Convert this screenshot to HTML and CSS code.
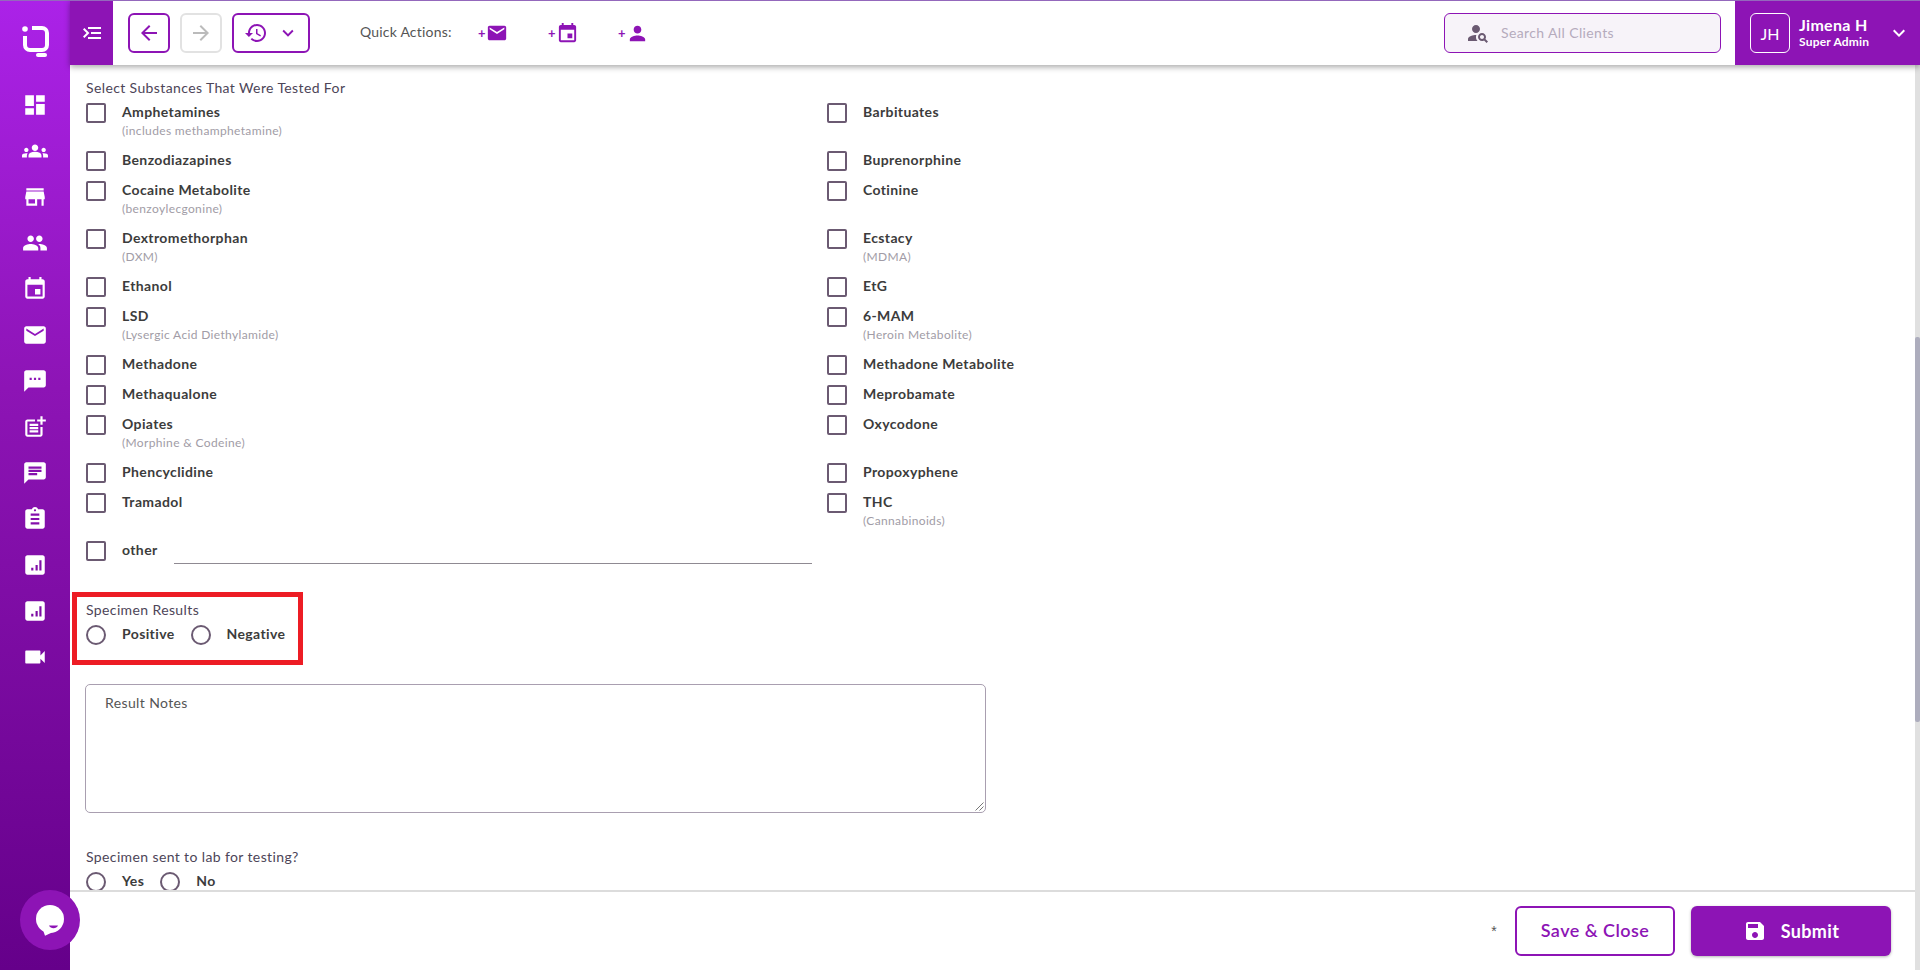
FILE: index.html
```html
<!DOCTYPE html>
<html lang="en">
<head>
<meta charset="utf-8">
<title>Specimen Results</title>
<link rel="stylesheet" href="styles.css">
</head>
<body>
<aside class="sidebar">
  <div class="logo">
    <svg viewBox="0 0 32 36" width="32" height="36"><circle cx="5" cy="4" r="2.800" fill="#fff"/><path d="M5 11v9a5 5 0 0 0 5 5h12a5 5 0 0 0 5-5V8a5 5 0 0 0-5-5H12" fill="none" stroke="#fff" stroke-width="4"/><rect x="16" y="28" width="11" height="4" rx="2" fill="#fff"/></svg>
  </div>
  <nav class="nav">
    <svg class="nav-icon" viewBox="0 0 24 24"><path d="M3 13h8V3H3v10zm0 8h8v-6H3v6zm10 0h8V11h-8v10zm0-18v6h8V3h-8z"/></svg>
    <svg class="nav-icon" viewBox="0 0 24 24"><path d="M12 12.750c1.630 0 3.070.39 4.240.9 1.080.48 1.760 1.560 1.760 2.730V18H6v-1.610c0-1.180.68-2.260 1.760-2.730 1.170-.52 2.610-.91 4.240-.91zM4 13c1.100 0 2-.9 2-2s-.9-2-2-2-2 .9-2 2 .9 2 2 2zm1.130 1.100c-.37-.06-.74-.1-1.130-.1-.99 0-1.930.21-2.780.58C.48 14.900 0 15.620 0 16.430V18h4.500v-1.610c0-.83.23-1.610.63-2.290zM20 13c1.100 0 2-.9 2-2s-.9-2-2-2-2 .9-2 2 .9 2 2 2zm4 3.430c0-.81-.48-1.530-1.220-1.850-.85-.37-1.790-.58-2.780-.58-.39 0-.76.04-1.130.1.4.68.63 1.460.63 2.290V18H24v-1.570zM12 6c1.660 0 3 1.340 3 3s-1.340 3-3 3-3-1.340-3-3 1.340-3 3-3z"/></svg>
    <svg class="nav-icon" viewBox="0 0 24 24"><path d="M20 4H4v2h16V4zm1 10v-2l-1-5H4l-1 5v2h1v6h10v-6h4v6h2v-6h1zm-9 4H6v-4h6v4z"/></svg>
    <svg class="nav-icon" viewBox="0 0 24 24"><path d="M16 11c1.660 0 2.990-1.340 2.990-3S17.660 5 16 5c-1.660 0-3 1.340-3 3s1.340 3 3 3zm-8 0c1.660 0 2.990-1.340 2.990-3S9.660 5 8 5C6.340 5 5 6.340 5 8s1.340 3 3 3zm0 2c-2.330 0-7 1.170-7 3.500V19h14v-2.500c0-2.330-4.670-3.500-7-3.500zm8 0c-.29 0-.62.02-.97.05 1.160.84 1.970 1.970 1.970 3.450V19h6v-2.500c0-2.330-4.670-3.500-7-3.500z"/></svg>
    <svg class="nav-icon" viewBox="0 0 24 24"><path d="M17 12h-5v5h5v-5zM16 1v2H8V1H6v2H5c-1.110 0-1.990.9-1.990 2L3 19c0 1.100.89 2 2 2h14c1.100 0 2-.9 2-2V5c0-1.100-.9-2-2-2h-1V1h-2zm3 18H5V8h14v11z"/></svg>
    <svg class="nav-icon" viewBox="0 0 24 24"><path d="M20 4H4c-1.100 0-1.990.9-1.990 2L2 18c0 1.100.9 2 2 2h16c1.100 0 2-.9 2-2V6c0-1.100-.9-2-2-2zm0 4l-8 5-8-5V6l8 5 8-5v2z"/></svg>
    <svg class="nav-icon" viewBox="0 0 24 24"><path d="M20 2H4c-1.100 0-1.990.9-1.990 2L2 22l4-4h14c1.100 0 2-.9 2-2V4c0-1.100-.9-2-2-2zM9 11H7V9h2v2zm4 0h-2V9h2v2zm4 0h-2V9h2v2z"/></svg>
    <svg class="nav-icon" viewBox="0 0 24 24"><path d="M17 19.220H5V7h7V5H5c-1.100 0-2 .9-2 2v12c0 1.100.9 2 2 2h12c1.100 0 2-.9 2-2v-7h-2v7.220z"/><path d="M19 2h-2v3h-3c.01.01 0 2 0 2h3v2.990c.01.01 2 0 2 0V7h3V5h-3V2z"/><path d="M7 9h8v2H7zM7 12h8v2H7zM7 15h8v2H7z"/></svg>
    <svg class="nav-icon" viewBox="0 0 24 24"><path d="M20 2H4c-1.100 0-1.990.9-1.990 2L2 22l4-4h14c1.100 0 2-.9 2-2V4c0-1.100-.9-2-2-2zM6 9h12v2H6V9zm8 5H6v-2h8v2zm4-6H6V6h12v2z"/></svg>
    <svg class="nav-icon" viewBox="0 0 24 24"><path d="M19 3h-4.180C14.400 1.840 13.300 1 12 1c-1.300 0-2.400.84-2.820 2H5c-1.100 0-2 .9-2 2v14c0 1.100.9 2 2 2h14c1.100 0 2-.9 2-2V5c0-1.100-.9-2-2-2zm-7 0c.55 0 1 .45 1 1s-.45 1-1 1-1-.45-1-1 .45-1 1-1zm4 14H8v-2h8v2zm0-4H8v-2h8v2zm0-4H8V7h8v2z"/></svg>
    <svg class="nav-icon" viewBox="0 0 24 24"><path fill-rule="evenodd" d="M5 3h14c1.100 0 2 .9 2 2v14c0 1.100-.9 2-2 2H5c-1.100 0-2-.9-2-2V5c0-1.100.9-2 2-2zm3.500 11.500v2.500h2v-2.500h-2zm4-2.500v5h2v-5h-2zm3.500-4.500v9.500h2V7.500h-2z"/></svg>
    <svg class="nav-icon" viewBox="0 0 24 24"><path fill-rule="evenodd" d="M5 3h14c1.100 0 2 .9 2 2v14c0 1.100-.9 2-2 2H5c-1.100 0-2-.9-2-2V5c0-1.100.9-2 2-2zm3.500 11.500v2.500h2v-2.500h-2zm4-2.500v5h2v-5h-2zm3.500-4.500v9.500h2V7.500h-2z"/></svg>
    <svg class="nav-icon" viewBox="0 0 24 24"><path d="M17 10.500V7c0-.55-.45-1-1-1H4c-.55 0-1 .45-1 1v10c0 .55.45 1 1 1h12c.55 0 1-.45 1-1v-3.500l4 4v-11l-4 4z"/></svg>
  </nav>
</aside>

<div class="main">
  <header class="topbar">
    <button class="toggle" type="button" aria-label="Toggle menu">
      <svg class="flip" viewBox="0 0 24 24" width="24" height="24"><path d="M3 18h13v-2H3v2zm0-5h10v-2H3v2zm0-7v2h13V6H3zm18 9.590L17.420 12 21 8.410 19.590 7l-5 5 5 5L21 15.590z"/></svg>
    </button>
    <div class="history-nav">
      <button class="tool" type="button" aria-label="Back"><svg viewBox="0 0 24 24" width="24" height="24"><path d="M20 11H7.830l5.590-5.590L12 4l-8 8 8 8 1.410-1.410L7.830 13H20v-2z"/></svg></button>
      <button class="tool disabled" type="button" aria-label="Forward"><svg viewBox="0 0 24 24" width="24" height="24"><path d="M12 4l-1.410 1.410L16.170 11H4v2h12.170l-5.580 5.590L12 20l8-8z"/></svg></button>
      <button class="tool wide" type="button" aria-label="History">
        <svg viewBox="0 0 24 24" width="24" height="24"><path d="M13 3c-4.970 0-9 4.030-9 9H1l3.890 3.890.07.14L9 12H6c0-3.870 3.130-7 7-7s7 3.130 7 7-3.130 7-7 7c-1.930 0-3.680-.79-4.940-2.060l-1.420 1.420C8.270 19.990 10.510 21 13 21c4.970 0 9-4.030 9-9s-4.030-9-9-9zm-1 5v5l4.280 2.540.72-1.210-3.500-2.080V8H12z"/></svg>
        <svg viewBox="0 0 24 24" width="22" height="22"><path d="M7.410 8.590L12 13.170l4.590-4.580L18 10l-6 6-6-6 1.410-1.410z"/></svg>
      </button>
    </div>
    <span class="quick-label">Quick Actions:</span>
    <div class="quick-actions">
      <span class="quick"><span class="plus">+</span><svg viewBox="0 0 24 24" width="22" height="22"><path d="M20 4H4c-1.100 0-1.990.9-1.990 2L2 18c0 1.100.9 2 2 2h16c1.100 0 2-.9 2-2V6c0-1.100-.9-2-2-2zm0 4l-8 5-8-5V6l8 5 8-5v2z"/></svg></span>
      <span class="quick"><span class="plus">+</span><svg viewBox="0 0 24 24" width="23" height="23"><path d="M17 12h-5v5h5v-5zM16 1v2H8V1H6v2H5c-1.110 0-1.990.9-1.990 2L3 19c0 1.100.89 2 2 2h14c1.100 0 2-.9 2-2V5c0-1.100-.9-2-2-2h-1V1h-2zm3 18H5V8h14v11z"/></svg></span>
      <span class="quick"><span class="plus">+</span><svg viewBox="0 0 24 24" width="23" height="23"><path d="M12 12c2.210 0 4-1.790 4-4s-1.790-4-4-4-4 1.790-4 4 1.790 4 4 4zm0 2c-2.670 0-8 1.340-8 4v2h16v-2c0-2.660-5.330-4-8-4z"/></svg></span>
    </div>
    <div class="search">
      <svg viewBox="0 0 24 24" width="24" height="24"><path d="M10 12c2.210 0 4-1.790 4-4s-1.790-4-4-4-4 1.790-4 4 1.790 4 4 4zM10.350 14.010C7.620 13.910 2 15.270 2 18v2h9.540c-2.470-2.760-1.230-5.890-1.190-5.990zM19.430 18.020c.36-.59.57-1.280.57-2.020 0-2.210-1.790-4-4-4s-4 1.790-4 4 1.790 4 4 4c.74 0 1.430-.22 2.020-.57L20.590 22 22 20.590l-2.570-2.570zM16 18c-1.100 0-2-.9-2-2s.9-2 2-2 2 .9 2 2-.9 2-2 2z"/></svg>
      <span class="search-text">Search All Clients</span>
    </div>
    <div class="user">
      <span class="avatar">JH</span>
      <span class="user-info"><span class="user-name">Jimena H</span><span class="user-role">Super Admin</span></span>
      <svg viewBox="0 0 24 24" width="24" height="24"><path d="M7.410 8.590L12 13.170l4.590-4.580L18 10l-6 6-6-6 1.410-1.410z"/></svg>
    </div>
  </header>

  <div class="body-row">
    <div class="column">
      <main class="content">
        <div class="field-title">Select Substances That Were Tested For</div>
        <div class="grid">
          <div class="item double"><span class="box"></span><span class="text"><b>Amphetamines</b><small>(includes methamphetamine)</small></span></div>
          <div class="item double"><span class="box"></span><span class="text"><b>Barbituates</b></span></div>
          <div class="item"><span class="box"></span><span class="text"><b>Benzodiazapines</b></span></div>
          <div class="item"><span class="box"></span><span class="text"><b>Buprenorphine</b></span></div>
          <div class="item double"><span class="box"></span><span class="text"><b>Cocaine Metabolite</b><small>(benzoylecgonine)</small></span></div>
          <div class="item double"><span class="box"></span><span class="text"><b>Cotinine</b></span></div>
          <div class="item double"><span class="box"></span><span class="text"><b>Dextromethorphan</b><small>(DXM)</small></span></div>
          <div class="item double"><span class="box"></span><span class="text"><b>Ecstacy</b><small>(MDMA)</small></span></div>
          <div class="item"><span class="box"></span><span class="text"><b>Ethanol</b></span></div>
          <div class="item"><span class="box"></span><span class="text"><b>EtG</b></span></div>
          <div class="item double"><span class="box"></span><span class="text"><b>LSD</b><small>(Lysergic Acid Diethylamide)</small></span></div>
          <div class="item double"><span class="box"></span><span class="text"><b>6-MAM</b><small>(Heroin Metabolite)</small></span></div>
          <div class="item"><span class="box"></span><span class="text"><b>Methadone</b></span></div>
          <div class="item"><span class="box"></span><span class="text"><b>Methadone Metabolite</b></span></div>
          <div class="item"><span class="box"></span><span class="text"><b>Methaqualone</b></span></div>
          <div class="item"><span class="box"></span><span class="text"><b>Meprobamate</b></span></div>
          <div class="item double"><span class="box"></span><span class="text"><b>Opiates</b><small>(Morphine &amp; Codeine)</small></span></div>
          <div class="item double"><span class="box"></span><span class="text"><b>Oxycodone</b></span></div>
          <div class="item"><span class="box"></span><span class="text"><b>Phencyclidine</b></span></div>
          <div class="item"><span class="box"></span><span class="text"><b>Propoxyphene</b></span></div>
          <div class="item double"><span class="box"></span><span class="text"><b>Tramadol</b></span></div>
          <div class="item double"><span class="box"></span><span class="text"><b>THC</b><small>(Cannabinoids)</small></span></div>
        </div>
        <div class="other"><span class="box"></span><b class="other-label">other</b><span class="other-line"></span></div>

        <section class="results">
          <div class="field-title">Specimen Results</div>
          <div class="radios">
            <span class="radio-item"><span class="radio"></span><b>Positive</b></span>
            <span class="radio-item"><span class="radio"></span><b>Negative</b></span>
          </div>
        </section>

        <div class="notes"><span class="notes-label">Result Notes</span>
          <svg class="grip" viewBox="0 0 10 10" width="10" height="10"><path d="M9.500 1.500L1.500 9.500M9.500 5.500L5.500 9.500" stroke="#777" fill="none"/></svg>
        </div>

        <div class="field-title lab">Specimen sent to lab for testing?</div>
        <div class="radios">
          <span class="radio-item"><span class="radio"></span><b>Yes</b></span>
          <span class="radio-item"><span class="radio"></span><b>No</b></span>
        </div>
      </main>
      <footer class="footer">
        <span class="star">*</span>
        <button class="btn-outline" type="button">Save &amp; Close</button>
        <button class="btn-solid" type="button"><svg viewBox="0 0 24 24" width="24" height="24"><path d="M17 3H5c-1.110 0-2 .9-2 2v14c0 1.100.89 2 2 2h14c1.100 0 2-.9 2-2V7l-4-4zm-5 16c-1.660 0-3-1.340-3-3s1.340-3 3-3 3 1.340 3 3-1.340 3-3 3zm3-10H5V5h10v4z"/></svg>Submit</button>
      </footer>
    </div>
    <div class="track"><div class="thumb"></div></div>
  </div>
</div>

<div class="chat">
  <svg viewBox="0 0 32 32" width="32" height="32"><circle cx="16" cy="15" r="14" fill="#fff"/><path d="M9 26l2 5.800 7-3.300z" fill="#fff"/><path d="M15 21.500h9c-.8 1.700-2.500 2.700-4.500 2.700s-3.700-1-4.500-2.700z" fill="#8d14b5"/></svg>
</div>
</body>
</html>
```
FILE: styles.css
```css
* { box-sizing: border-box; }
html, body { margin: 0; height: 100%; }
body {
  display: flex;
  height: 970px;
  overflow: hidden;
  font-family: "Lato", "Open Sans", sans-serif;
  font-size: 14px;
  letter-spacing: .38px;
  color: #444;
  background: #fff;
}
b { font-weight: 700; }
button { font-family: inherit; cursor: pointer; letter-spacing: inherit; }

.sidebar {
  width: 70px;
  flex: none;
  background: linear-gradient(180deg, #ab22e8 0%, #8d14b5 40%, #65008a 100%);
  border-top: 1px solid #9468bc;
  display: flex;
  flex-direction: column;
  align-items: center;
}
.logo { height: 74px; padding: 24px 0 0 1px; }
.logo svg { display: block; }
.nav { display: flex; flex-direction: column; align-items: center; gap: 20px; padding-top: 17px; }
.nav-icon { width: 26px; height: 26px; fill: #fff; display: block; }

.main { flex: 1; min-width: 0; display: flex; flex-direction: column; }
.topbar {
  height: 65px;
  flex: none;
  display: flex;
  align-items: center;
  background: #fff;
  border-top: 1px solid #9468bc;
  box-shadow: 0 2px 6px rgba(0,0,0,.35);
  position: relative;
  z-index: 2;
}
.toggle {
  width: 43px;
  height: 100%;
  border: 0;
  padding: 0;
  background: #8d14b5;
  display: flex;
  align-items: center;
  justify-content: center;
  fill: #fff;
}
.flip { transform: scaleX(-1); }
.history-nav { display: flex; gap: 10px; margin-left: 15px; }
.tool {
  width: 42px;
  height: 40px;
  padding: 0;
  border: 2px solid #8d14b5;
  border-radius: 6px;
  background: #fff;
  fill: #8d14b5;
  display: flex;
  align-items: center;
  justify-content: center;
}
.tool.disabled { border-color: #e2e2e2; fill: #bbb; }
.tool.wide { width: 78px; gap: 9px; }
.quick-label { margin-left: 50px; width: 118px; color: #555; font-size: 14px; letter-spacing: .2px; line-height: 16px; padding-bottom: 2px; }
.quick-actions { display: flex; }
.quick { width: 70px; display: flex; align-items: center; fill: #8d14b5; }
.plus { color: #8d14b5; font-size: 13px; font-weight: 700; letter-spacing: 0; }
.search {
  margin-left: auto;
  width: 277px;
  height: 40px;
  background: #f7f3f9;
  border: 1px solid #8d14b5;
  border-radius: 6px;
  display: flex;
  align-items: center;
  padding-left: 21px;
  fill: #6b5a72;
}
.search-text { margin-left: 11px; color: #b5abbd; font-size: 14px; padding-bottom: 2px; }
.user {
  margin-left: 14px;
  width: 185px;
  height: 100%;
  background: #8d14b5;
  color: #fff;
  fill: #fff;
  display: flex;
  align-items: center;
  padding-left: 15px;
}
.avatar {
  width: 40px;
  height: 40px;
  border: 1px solid #fff;
  border-radius: 6px;
  display: flex;
  align-items: center;
  justify-content: center;
  font-size: 16px;
  letter-spacing: 0;
}
.user-info { display: flex; flex-direction: column; margin-left: 9px; width: 88px; margin-top: -2px; }
.user-name { font-size: 16px; font-weight: 700; line-height: 18px; letter-spacing: .3px; }
.user-role { font-size: 12px; font-weight: 700; line-height: 15px; letter-spacing: .2px; }

.body-row { flex: 1; min-height: 0; display: flex; }
.column { flex: 1; min-width: 0; display: flex; flex-direction: column; }
.track { width: 5px; flex: none; background: #e0e0e0; }
.thumb { width: 5px; height: 385px; margin-top: 272px; background: #adadbd; border-radius: 2px; }

.content { flex: 1; min-height: 0; overflow: hidden; padding: 14px 0 0 16px; }
.field-title { font-size: 14px; line-height: 18px; color: #4d4558; }
.grid { display: grid; grid-template-columns: 741px 400px; margin-top: 6px; }
.item { display: flex; align-items: flex-start; height: 30px; }
.item.double { height: 48px; }
.box {
  width: 20px;
  height: 20px;
  flex: none;
  border: 2px solid #6b5a72;
  border-radius: 2px;
}
.text { margin-left: 16px; display: flex; flex-direction: column; }
.text b { font-size: 14px; line-height: 18px; color: #3c3c3c; }
.text small { font-size: 12px; line-height: 14px; margin-top: 3px; color: #a19ca6; letter-spacing: .35px; }

.other { display: flex; align-items: flex-start; }
.other-label { margin-left: 16px; font-size: 14px; line-height: 18px; color: #3c3c3c; width: 52px; }
.other-line { width: 638px; margin-top: 22px; border-bottom: 1px solid #8f8a92; }

.results {
  width: 231px;
  height: 73px;
  margin: 28px 0 0 -14px;
  border: 5px solid #ed1c24;
  padding: 4px 0 0 9px;
}
.radios { display: flex; gap: 16px; margin-top: 6px; }
.radio-item { display: flex; align-items: center; gap: 16px; }
.radio-item b { font-size: 14px; color: #3c3c3c; line-height: 18px; padding-bottom: 2px; }
.radio { width: 20px; height: 20px; border: 2px solid #6b5a72; border-radius: 50%; flex: none; }

.notes {
  position: relative;
  width: 901px;
  height: 129px;
  margin: 19px 0 0 -1px;
  border: 1px solid #a99fb0;
  border-radius: 5px;
  padding: 9px 0 0 19px;
  color: #555;
}
.grip { position: absolute; right: 1px; bottom: 1px; }
.lab { margin-top: 35px; }

.footer {
  height: 80px;
  flex: none;
  background: #fff;
  border-top: 2px solid #dcdcdc;
  display: flex;
  align-items: flex-start;
  justify-content: flex-end;
  padding: 14px 24px 0 0;
  position: relative;
  z-index: 1;
}
.star { font: 14px/16px "Liberation Sans", sans-serif; margin: 17px 18px 0 0; color: #555; }
.btn-outline {
  width: 160px;
  height: 50px;
  padding: 0 0 2px;
  background: #fff;
  border: 2px solid #8d14b5;
  border-radius: 6px;
  color: #8d14b5;
  font-size: 18px;
  font-weight: 600;
  letter-spacing: .45px;
}
.btn-solid {
  width: 200px;
  height: 50px;
  margin-left: 16px;
  padding: 0 0 1px;
  border: 0;
  border-radius: 6px;
  background: #8d14b5;
  color: #fff;
  fill: #fff;
  font-size: 18px;
  font-weight: 700;
  display: flex;
  align-items: center;
  justify-content: center;
  gap: 14px;
  box-shadow: 0 1px 3px rgba(0,0,0,.3);
}

.chat {
  position: fixed;
  left: 20px;
  top: 890px;
  width: 60px;
  height: 60px;
  border-radius: 50%;
  background: #8d14b5;
  display: flex;
  align-items: center;
  justify-content: center;
  z-index: 5;
}
```
